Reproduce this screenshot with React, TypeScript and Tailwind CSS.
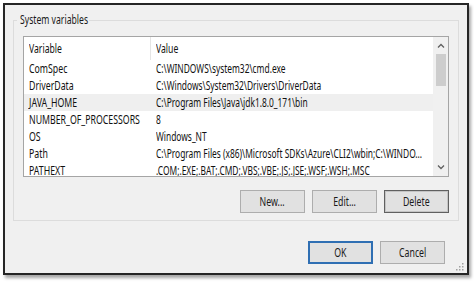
import React from "react";

const rows: [string, string, boolean?][] = [
  ["ComSpec", "C:\\WINDOWS\\system32\\cmd.exe"],
  ["DriverData", "C:\\Windows\\System32\\Drivers\\DriverData"],
  ["JAVA_HOME", "C:\\Program Files\\Java\\jdk1.8.0_171\\bin", true],
  ["NUMBER_OF_PROCESSORS", "8"],
  ["OS", "Windows_NT"],
  ["Path", "C:\\Program Files (x86)\\Microsoft SDKs\\Azure\\CLI2\\wbin;C:\\WINDO..."],
  ["PATHEXT", ".COM;.EXE;.BAT;.CMD;.VBS;.VBE;.JS;.JSE;.WSF;.WSH;.MSC"],
];

function Btn({ label, kind }: { label: string; kind?: "focus" | "default" }) {
  const cls =
    kind === "focus"
      ? "border border-[#606060] shadow-[inset_0_0_0_1px_#c4c4c4]"
      : kind === "default"
      ? "border-2 border-[#2f6fb3]"
      : "border border-[#adadad]";
  return (
    <div
      className={`w-[65px] h-[23px] flex items-center justify-center bg-[#e1e1e1] text-[12px] text-[#1a1a1a] ${cls}`}
    >
      <span className="inline-block whitespace-nowrap scale-x-[0.73]">{label}</span>
    </div>
  );
}

export default function App() {
  return (
    <div
      className="w-[474px] h-[283px] bg-white pt-[3px] pl-[3px] overflow-hidden"
      style={{ fontFamily: '"Noto Sans", sans-serif' }}
    >
      <div className="w-[466px] h-[272px] border-2 border-[#262626] bg-[#f0f0f0] shadow-[2px_3px_3px_rgba(0,0,0,0.35)] flex flex-col relative">
        <fieldset className="mx-[8px] mt-[6px] border border-[#dcdcdc] px-[9px] pb-[10px] m-0 min-w-0 h-[210px]">
          <legend className="-ml-[6px] w-[72px] pl-[3px] text-[12px] text-[#1a1a1a] leading-[18px] whitespace-nowrap">
            <span className="inline-block origin-left scale-x-[0.72]">System variables</span>
          </legend>
          <div className="mt-[7px] h-[141px] border border-[#a5a5a5] bg-white flex overflow-hidden">
            <div className="flex-1 min-w-0 flex flex-col text-[12px] text-[#111]">
              <div className="h-[23px] shrink-0 flex items-center">
                <div className="w-[127px] pl-[5px] h-full flex items-center border-r border-[#e5e5e5]">
                  <span className="inline-block origin-left scale-x-[0.72]">Variable</span>
                </div>
                <div className="pl-[5px]">
                  <span className="inline-block origin-left scale-x-[0.72]">Value</span>
                </div>
              </div>
              {rows.map(([k, v, sel]) => (
                <div
                  key={k}
                  className={`h-[17px] shrink-0 flex items-center whitespace-nowrap ${
                    sel ? "bg-[#efefef]" : ""
                  }`}
                >
                  <div className="w-[128px] pl-[5px] shrink-0">
                    <span className="inline-block origin-left scale-x-[0.73]">{k}</span>
                  </div>
                  <div className="pl-[4px] overflow-hidden">
                    <span className="inline-block origin-left scale-x-[0.7]">{v}</span>
                  </div>
                </div>
              ))}
            </div>
            <div className="w-[15px] shrink-0 bg-[#f0f0f0] flex flex-col items-center">
              <div className="h-[17px] w-full flex items-center justify-center">
                <svg width="8" height="5" viewBox="0 0 8 5">
                  <path d="M1 4.5 L4 1.5 L7 4.5" fill="none" stroke="#606060" strokeWidth="1.3" />
                </svg>
              </div>
              <div className="w-[10px] h-[32px] bg-[#cdcdcd]" />
              <div className="flex-1" />
              <div className="h-[17px] w-full flex items-center justify-center">
                <svg width="8" height="5" viewBox="0 0 8 5">
                  <path d="M1 0.5 L4 3.5 L7 0.5" fill="none" stroke="#606060" strokeWidth="1.3" />
                </svg>
              </div>
            </div>
          </div>
          <div className="mt-[13px] flex justify-end gap-[7px]">
            <Btn label="New..." />
            <Btn label="Edit..." />
            <Btn label="Delete" kind="focus" />
          </div>
        </fieldset>
        <div className="mt-[20px] mr-[22px] flex justify-end gap-[7px]">
          <Btn label="OK" kind="default" />
          <Btn label="Cancel" />
        </div>
        <svg className="absolute right-[3px] bottom-[2px]" width="10" height="10" viewBox="0 0 10 10">
          {[
            [8, 2],
            [8, 5],
            [5, 5],
            [8, 8],
            [5, 8],
            [2, 8],
          ].map(([x, y], i) => (
            <rect key={i} x={x} y={y} width="1.5" height="1.5" fill="#a0a0a0" />
          ))}
        </svg>
      </div>
    </div>
  );
}
